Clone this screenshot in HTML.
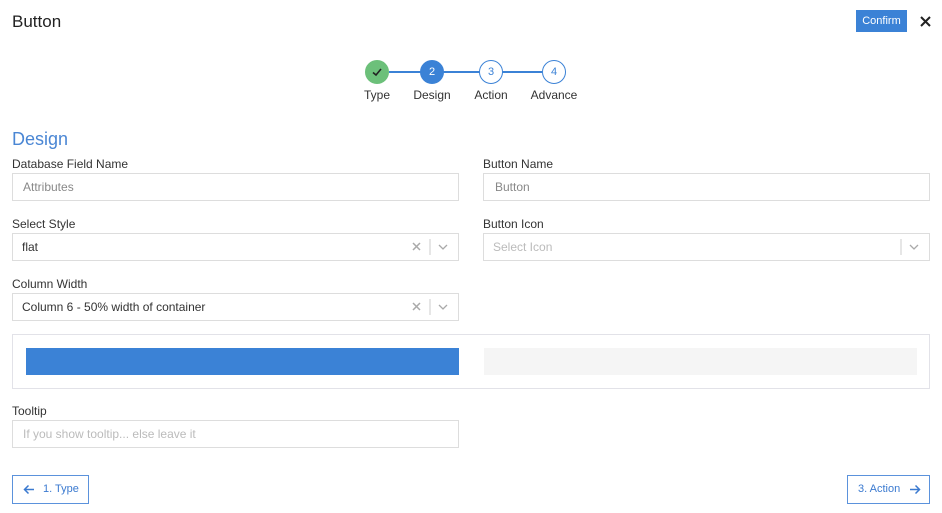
<!DOCTYPE html>
<html><head><style>
*{box-sizing:border-box;margin:0;padding:0}
body{width:942px;height:513px;background:#fff;font-family:"Liberation Sans",sans-serif;position:relative;overflow:hidden;color:#333}
.a{position:absolute}
.lbl{font-size:12px;color:#333}
.inp{position:absolute;height:28px;border:1px solid #ddd;font-size:12px;line-height:26px;padding-left:10px;white-space:nowrap}
.ph{color:#888}
.c{position:absolute;width:24px;height:24px;border-radius:50%;font-size:11px;text-align:center;line-height:22px;top:60px}
.sl{position:absolute;font-size:12px;top:88px;text-align:center;width:60px}
.ic{position:absolute;right:0;top:0;height:26px;width:56px;color:#aaa}
.ic svg{left:10px!important;overflow:visible}
.btn{position:absolute;top:475px;height:29px;border:1px solid #5b92dc;color:#3b7ad0;font-size:11px;line-height:27px;white-space:nowrap}
</style></head><body>
<div class="a" style="left:12px;top:12px;font-size:17px;color:#222">Button</div>
<div class="a" style="left:856px;top:10px;width:51px;height:22px;background:#3b82d6;color:#fff;font-size:11px;text-align:center;line-height:23px">Confirm</div>
<svg class="a" style="left:920px;top:16px" width="11" height="11"><path d="M1 1L10 10M10 1L1 10" stroke="#222" stroke-width="2"/></svg>

<div class="a" style="left:389px;top:71px;width:153px;height:2px;background:#3b82d6"></div>
<div class="c" style="left:365px;background:#6cc07a;border:1px solid #6cc07a"><svg width="22" height="22" style="position:absolute;left:0;top:0"><path d="M7 11.5L10 14L15 8" stroke="#222" stroke-width="1.6" fill="none"/></svg></div>
<div class="c" style="left:420px;background:#3b82d6;border:1px solid #3b82d6;color:#fff">2</div>
<div class="c" style="left:479px;background:#fff;border:1px solid #3b82d6;color:#3b82d6">3</div>
<div class="c" style="left:542px;background:#fff;border:1px solid #3b82d6;color:#3b82d6">4</div>
<div class="sl" style="left:347px">Type</div>
<div class="sl" style="left:402px">Design</div>
<div class="sl" style="left:461px">Action</div>
<div class="sl" style="left:524px">Advance</div>

<div class="a" style="left:12px;top:129px;font-size:18px;color:#4a86d4">Design</div>
<div class="a lbl" style="left:12px;top:157px">Database Field Name</div>
<div class="inp ph" style="left:12px;top:173px;width:447px">Attributes</div>
<div class="a lbl" style="left:483px;top:157px">Button Name</div>
<div class="inp ph" style="left:483px;top:173px;width:447px;padding-left:11px">Button</div>

<div class="a lbl" style="left:12px;top:217px">Select Style</div>
<div class="inp" style="left:12px;top:233px;width:447px;padding-left:9px">flat<div class="ic"><svg class="a" style="top:0" width="56" height="26"><path d="M1 9L8 16M8 9L1 16" stroke="#aaa" stroke-width="1.5"/><path d="M18 5V21" stroke="#ccc"/><path d="M27 11L31 15L35 11" stroke="#aaa" stroke-width="1.3" fill="none"/></svg></div></div>
<div class="a lbl" style="left:483px;top:217px">Button Icon</div>
<div class="inp" style="left:483px;top:233px;width:447px;padding-left:9px;color:#bbb">Select Icon<div class="ic"><svg class="a" style="top:0" width="56" height="26"><path d="M18 5V21" stroke="#ccc"/><path d="M27 11L31 15L35 11" stroke="#aaa" stroke-width="1.3" fill="none"/></svg></div></div>

<div class="a lbl" style="left:12px;top:277px">Column Width</div>
<div class="inp" style="left:12px;top:293px;width:447px;padding-left:9px">Column 6 - 50% width of container<div class="ic"><svg class="a" style="top:0" width="56" height="26"><path d="M1 9L8 16M8 9L1 16" stroke="#aaa" stroke-width="1.5"/><path d="M18 5V21" stroke="#ccc"/><path d="M27 11L31 15L35 11" stroke="#aaa" stroke-width="1.3" fill="none"/></svg></div></div>

<div class="a" style="left:12px;top:334px;width:918px;height:55px;border:1px solid #e2e2e8"></div>
<div class="a" style="left:26px;top:348px;width:433px;height:27px;background:#3b82d6"></div>
<div class="a" style="left:484px;top:348px;width:433px;height:27px;background:#f5f5f5"></div>

<div class="a lbl" style="left:12px;top:404px">Tooltip</div>
<div class="inp" style="left:12px;top:420px;width:447px;color:#bbb">If you show tooltip... else leave it</div>

<div class="btn" style="left:12px;width:77px"><svg class="a" style="left:10px;top:8px" width="12" height="11"><path d="M11 5.5H1.5M5.5 1.5L1.5 5.5L5.5 9.5" stroke="#3b7ad0" stroke-width="1.5" fill="none"/></svg><span class="a" style="left:30px;top:0">1. Type</span></div>
<div class="btn" style="left:847px;width:83px"><span class="a" style="left:10px;top:0">3. Action</span><svg class="a" style="left:61px;top:8px" width="12" height="11"><path d="M1 5.5H10.5M6.5 1.5L10.5 5.5L6.5 9.5" stroke="#3b7ad0" stroke-width="1.5" fill="none"/></svg></div>
</body></html>
